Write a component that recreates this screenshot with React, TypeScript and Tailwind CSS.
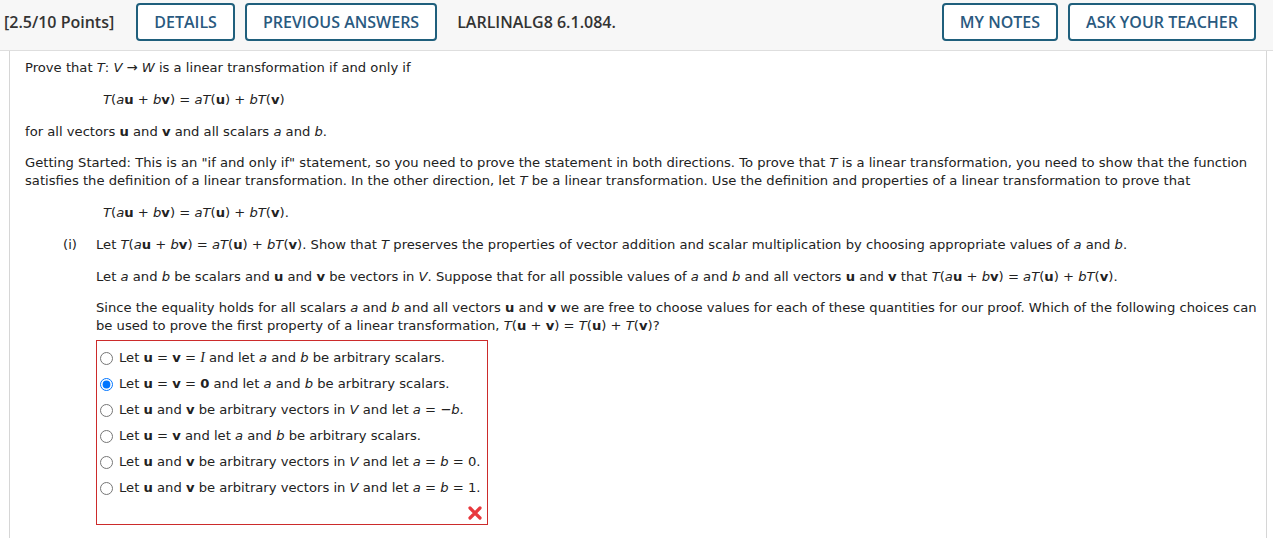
import React from 'react';

const I = ({ children }: { children: React.ReactNode }) => <i>{children}</i>;
const B = ({ children }: { children: React.ReactNode }) => <b>{children}</b>;

function Eq({ dot }: { dot?: boolean }) {
  return (
    <>
      <I>T</I>(<I>a</I>
      <B>u</B> + <I>b</I>
      <B>v</B>) = <I>a</I>
      <I>T</I>(<B>u</B>) + <I>b</I>
      <I>T</I>(<B>v</B>){dot ? '.' : ''}
    </>
  );
}

function HeaderButton({ label }: { label: string }) {
  return (
    <button className="h-[38px] px-4 border-2 border-[#1f5f7c] rounded-[4px] bg-white text-[#2a5a7f] text-[16px] font-semibold">
      {label}
    </button>
  );
}

function Option({ checked, children }: { checked?: boolean; children: React.ReactNode }) {
  return (
    <label className="flex items-center h-[26px]">
      <input
        type="radio"
        name="q"
        defaultChecked={checked}
        className="w-[13px] h-[13px] ml-[3px] mr-[6px] m-0"
      />
      <span>{children}</span>
    </label>
  );
}

export default function App() {
  return (
    <div className="w-[1273px] h-[538px] bg-white overflow-hidden">
      {/* Header */}
      <div className="h-[51px] bg-[#f7f7f7] border-b border-[#dedede] font-['Open_Sans',sans-serif]">
        <div className="flex items-center gap-[10px] pt-[3px] pl-[4px] pr-[17px]">
          <span className="text-[16px] font-semibold text-[#333] mr-[12px]">[2.5/10 Points]</span>
          <HeaderButton label="DETAILS" />
          <HeaderButton label="PREVIOUS ANSWERS" />
          <span className="ml-[10px] text-[16px] font-semibold text-[#333]">LARLINALG8 6.1.084.</span>
          <div className="ml-auto flex gap-[10px]">
            <HeaderButton label="MY NOTES" />
            <HeaderButton label="ASK YOUR TEACHER" />
          </div>
        </div>
      </div>

      {/* Question body */}
      <div className="ml-[9px] mr-[6px] h-[487px] border-x border-[#d6d6d6] pl-[15px] pr-[6px] pt-[8px] font-['DejaVu_Sans',Verdana,sans-serif] text-[13.15px] leading-[18px] text-[#222]">
        <p>
          Prove that <I>T</I>: <I>V</I> → <I>W</I> is a linear transformation if and only if
        </p>
        <p className="mt-[14px] pl-[78px]">
          <Eq />
        </p>
        <p className="mt-[14px]">
          for all vectors <B>u</B> and <B>v</B> and all scalars <I>a</I> and <I>b</I>.
        </p>
        <p className="mt-[13px] pr-[10px]">
          Getting Started: This is an "if and only if" statement, so you need to prove the statement in both directions. To
          prove that <I>T</I> is a linear transformation, you need to show that the function satisfies the definition of a
          linear transformation. In the other direction, let <I>T</I> be a linear transformation. Use the definition and
          properties of a linear transformation to prove that
        </p>
        <p className="mt-[14px] pl-[78px]">
          <Eq dot />
        </p>
        <div className="mt-[14px] flex">
          <span className="w-[71px] pl-[38px]">(i)</span>
          <div className="flex-1">
            <p>
              Let <Eq />. Show that <I>T</I> preserves the properties of vector addition and scalar multiplication by
              choosing appropriate values of <I>a</I> and <I>b</I>.
            </p>
            <p className="mt-[14px]">
              Let <I>a</I> and <I>b</I> be scalars and <B>u</B> and <B>v</B> be vectors in <I>V</I>. Suppose that for all
              possible values of <I>a</I> and <I>b</I> and all vectors <B>u</B> and <B>v</B> that <Eq dot />
            </p>
            <p className="mt-[13px]">
              Since the equality holds for all scalars <I>a</I> and <I>b</I> and all vectors <B>u</B> and <B>v</B> we are
              free to choose values for each of these quantities for our proof. Which of the following choices can be used
              to prove the first property of a linear transformation, <I>T</I>(<B>u</B> + <B>v</B>) = <I>T</I>(<B>u</B>) +{' '}
              <I>T</I>(<B>v</B>)?
            </p>
            <div className="mt-[5px] w-[392px] h-[185px] border border-[#cc2b2b] pt-[4px] flex flex-col">
              <Option>
                Let <B>u</B> = <B>v</B> = <span className="font-['Liberation_Serif',serif] italic text-[14px]">I</span> and
                let <I>a</I> and <I>b</I> be arbitrary scalars.
              </Option>
              <Option checked>
                Let <B>u</B> = <B>v</B> = <B>0</B> and let <I>a</I> and <I>b</I> be arbitrary scalars.
              </Option>
              <Option>
                Let <B>u</B> and <B>v</B> be arbitrary vectors in <I>V</I> and let <I>a</I> = −<I>b</I>.
              </Option>
              <Option>
                Let <B>u</B> = <B>v</B> and let <I>a</I> and <I>b</I> be arbitrary scalars.
              </Option>
              <Option>
                Let <B>u</B> and <B>v</B> be arbitrary vectors in <I>V</I> and let <I>a</I> = <I>b</I> = 0.
              </Option>
              <Option>
                Let <B>u</B> and <B>v</B> be arbitrary vectors in <I>V</I> and let <I>a</I> = <I>b</I> = 1.
              </Option>
              <div className="flex justify-end pr-[5px] mt-[5px]">
                <svg width="14" height="14" viewBox="0 0 14 14">
                  <path d="M2 2 L12 12 M12 2 L2 12" stroke="#e8383d" strokeWidth="3.2" strokeLinecap="round" />
                </svg>
              </div>
            </div>
          </div>
        </div>
      </div>
    </div>
  );
}
